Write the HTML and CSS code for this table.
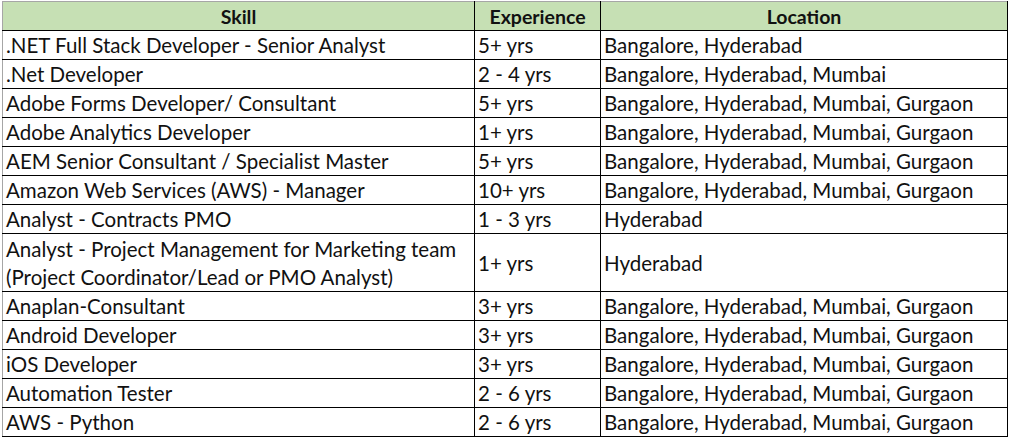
FILE: index.html
```html
<!DOCTYPE html>
<html>
<head>
<meta charset="utf-8">
<link rel="stylesheet" href="styles.css">
</head>
<body>
<table class="sheet">
  <colgroup>
    <col class="c-skill">
    <col class="c-exp">
    <col class="c-loc">
  </colgroup>
  <thead>
    <tr><th>Skill</th><th>Experience</th><th>Location</th></tr>
  </thead>
  <tbody>
    <tr><td>.NET Full Stack Developer - Senior Analyst</td><td>5+ yrs</td><td>Bangalore, Hyderabad</td></tr>
    <tr><td>.Net Developer</td><td>2 - 4 yrs</td><td>Bangalore, Hyderabad, Mumbai</td></tr>
    <tr><td>Adobe Forms Developer/ Consultant</td><td>5+ yrs</td><td>Bangalore, Hyderabad, Mumbai, Gurgaon</td></tr>
    <tr><td>Adobe Analytics Developer</td><td>1+ yrs</td><td>Bangalore, Hyderabad, Mumbai, Gurgaon</td></tr>
    <tr><td>AEM Senior Consultant / Specialist Master</td><td>5+ yrs</td><td>Bangalore, Hyderabad, Mumbai, Gurgaon</td></tr>
    <tr><td>Amazon Web Services (AWS) - Manager</td><td>10+ yrs</td><td>Bangalore, Hyderabad, Mumbai, Gurgaon</td></tr>
    <tr><td>Analyst - Contracts PMO</td><td>1 - 3 yrs</td><td>Hyderabad</td></tr>
    <tr class="tall"><td>Analyst - Project Management for Marketing team<br>(Project Coordinator/Lead or PMO Analyst)</td><td>1+ yrs</td><td>Hyderabad</td></tr>
    <tr><td>Anaplan-Consultant</td><td>3+ yrs</td><td>Bangalore, Hyderabad, Mumbai, Gurgaon</td></tr>
    <tr><td>Android Developer</td><td>3+ yrs</td><td>Bangalore, Hyderabad, Mumbai, Gurgaon</td></tr>
    <tr><td>iOS Developer</td><td>3+ yrs</td><td>Bangalore, Hyderabad, Mumbai, Gurgaon</td></tr>
    <tr><td>Automation Tester</td><td>2 - 6 yrs</td><td>Bangalore, Hyderabad, Mumbai, Gurgaon</td></tr>
    <tr><td>AWS - Python</td><td>2 - 6 yrs</td><td>Bangalore, Hyderabad, Mumbai, Gurgaon</td></tr>
  </tbody>
</table>
</body>
</html>
```
FILE: styles.css
```css
html, body {
  margin: 0;
  padding: 0;
  background: #ffffff;
}
body {
  padding: 1px 0 0 2px;
  font-family: "Lato", "Open Sans", sans-serif;
  color: #111111;
}
.sheet {
  border-collapse: collapse;
  table-layout: fixed;
  width: 1005px;
  font-size: 20.5px;
}
.c-skill { width: 472px; }
.c-exp { width: 126px; }
.c-loc { width: 407px; }
.sheet th,
.sheet td {
  border: 1px solid #000000;
  padding: 1px 0 0 3px;
  height: 27px;
  line-height: 27px;
  white-space: nowrap;
  overflow: hidden;
  vertical-align: middle;
  text-align: left;
}
.sheet th {
  background: #c6e0b4;
  font-weight: 700;
  text-align: center;
  padding: 1px 0 0 0;
  height: 27px;
  font-size: 19.5px;
  border-top-color: #a6a6a6;
}
.sheet tr > :first-child {
  border-left-color: #a6a6a6;
}
.sheet tr.tall td {
  height: 56px;
  line-height: 28px;
}
```
